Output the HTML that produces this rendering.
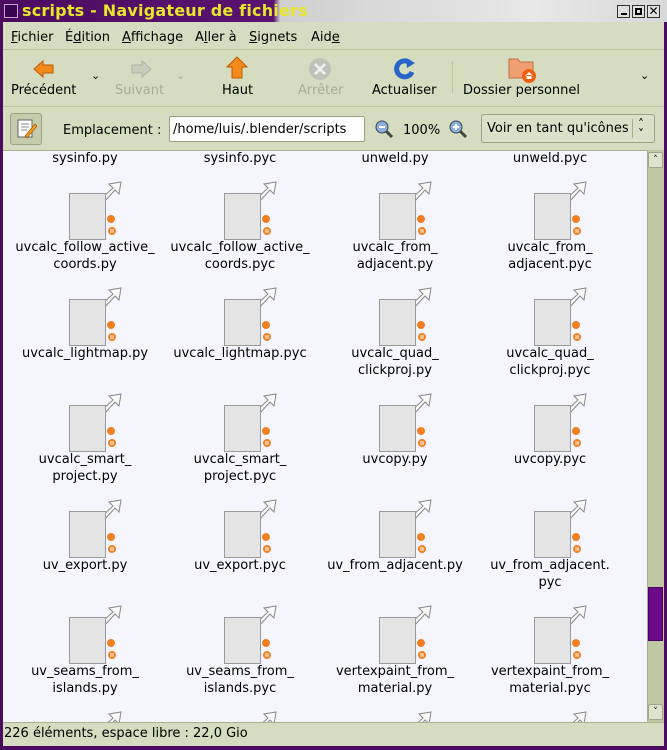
<!DOCTYPE html>
<html><head><meta charset="utf-8"><style>
*{margin:0;padding:0;box-sizing:border-box}
body{width:667px;height:750px;overflow:hidden;background:#4a0a5e;font-family:"DejaVu Sans","Liberation Sans",sans-serif;font-size:13px;color:#000;position:relative}
.abs{position:absolute}
#title{left:0;top:0;width:667px;height:22px;background:linear-gradient(90deg,#4b0c60 0,#5a1370 40%,#5a1370 41%,#cfcfcf 42%,#e8e8e8 80%,#d8d8d8 100%)}
#titletxt{left:22px;top:1px;color:#e6e62a;font-weight:bold;font-size:16px;letter-spacing:0.2px}
#win{left:3px;top:22px;width:661px;height:724px;background:#d5dcbf}
.mi{position:absolute;top:8px}
.tb{position:absolute;text-align:center;font-size:13px}
.gray{color:#a8ad98}
#view{left:3px;top:150px;width:644px;height:572px;background:#f5f6fd;overflow:hidden;border-top:1px solid #aab090}
.lbl{position:absolute;width:154px;text-align:center;line-height:17px;font-size:13px}
.ic{position:absolute;width:56px;height:60px}
</style></head><body>
<div id="title" class="abs">
 <div class="abs" style="left:4px;top:4px;width:14px;height:14px;background:#3a0550;border:1px solid #c8a0d8"></div>
 <div id="titletxt" class="abs">scripts - Navigateur de fichiers</div>
 <div class="abs" style="left:617px;top:5px;width:13px;height:13px;background:#e0e0e0;border:1px solid #333"><div class="abs" style="left:3px;top:7px;width:6px;height:2px;background:#000"></div></div>
 <div class="abs" style="left:632px;top:5px;width:13px;height:13px;background:#e0e0e0;border:1px solid #333"><div class="abs" style="left:2px;top:2px;width:7px;height:7px;border:2px solid #000"></div></div>
 <div class="abs" style="left:647px;top:5px;width:13px;height:13px;background:#e0e0e0;border:1px solid #333;font-size:12px;font-weight:bold;line-height:11px;text-align:center">✕</div>
</div>
<div id="win" class="abs">
 <div class="mi" style="left:8px"><u>F</u>ichier</div>
 <div class="mi" style="left:62px">É<u>d</u>ition</div>
 <div class="mi" style="left:119px"><u>A</u>ffichage</div>
 <div class="mi" style="left:192px">A<u>l</u>ler à</div>
 <div class="mi" style="left:246px"><u>S</u>ignets</div>
 <div class="mi" style="left:308px">Aid<u>e</u></div>
 <div class="abs" style="left:0;top:27px;width:661px;height:1px;background:#bcc4a4"></div>
 <!-- toolbar -->
 <svg class="abs" style="left:30px;top:37px" width="22" height="20"><path d="M1 10 L10 2 L10 6 L20 6 L20 14 L10 14 L10 18 Z" fill="#f58a1c" stroke="#c05a00"/></svg>
 <div class="tb" style="left:8px;top:61px">Précédent</div>
 <div class="abs" style="left:88px;top:47px;font-size:11px">⌄</div>
 <svg class="abs" style="left:127px;top:37px" width="22" height="20"><path d="M21 10 L12 2 L12 6 L2 6 L2 14 L12 14 L12 18 Z" fill="#c8ccbc" stroke="#b0b4a4"/></svg>
 <div class="tb gray" style="left:112px;top:61px">Suivant</div>
 <div class="abs gray" style="left:173px;top:47px;font-size:11px">⌄</div>
 <svg class="abs" style="left:223px;top:34px" width="22" height="24"><path d="M11 1 L21 11 L16 11 L16 22 L6 22 L6 11 L1 11 Z" fill="#f58a1c" stroke="#c05a00"/></svg>
 <div class="tb" style="left:219px;top:61px">Haut</div>
 <svg class="abs" style="left:305px;top:35px" width="24" height="24"><circle cx="12" cy="12" r="11" fill="#bfc2b8"/><path d="M7 7 L17 17 M17 7 L7 17" stroke="#eee" stroke-width="3"/></svg>
 <div class="tb gray" style="left:295px;top:61px">Arrêter</div>
 <svg class="abs" style="left:390px;top:34px" width="24" height="26"><path d="M18 8 A8 8 0 1 0 19 16" fill="none" stroke="#2a64c8" stroke-width="5"/><path d="M13 2 L22 7 L14 12 Z" fill="#2a64c8"/></svg>
 <div class="tb" style="left:369px;top:61px">Actualiser</div>
 <div class="abs" style="left:449px;top:39px;width:1px;height:32px;background:#bcc4a4"></div>
 <svg class="abs" style="left:505px;top:34px" width="30" height="28"><path d="M1 3 L10 3 L12 6 L25 6 L25 22 L1 22 Z" fill="#f0a070" stroke="#c07040"/><circle cx="21" cy="20" r="7" fill="#f06010"/><path d="M17 20 L21 16 L25 20 M18.5 19 L18.5 23 L23.5 23 L23.5 19" fill="#fff"/></svg>
 <div class="tb" style="left:460px;top:61px">Dossier personnel</div>
 <div class="abs" style="left:637px;top:47px;font-size:11px">⌄</div>
 <div class="abs" style="left:0;top:84px;width:661px;height:1px;background:#bcc4a4"></div>
 <!-- location -->
 <div class="abs" style="left:7px;top:91px;width:32px;height:32px;border:1px solid #9aa284;border-radius:3px;background:#c5ccac"></div>
 <svg class="abs" style="left:14px;top:97px" width="20" height="20"><rect x="1" y="1" width="14" height="17" fill="#fff" stroke="#666"/><path d="M4 5h8M4 8h8M4 11h6" stroke="#888"/><path d="M8 17 L18 5 L20 7 L10 19 Z" fill="#f5a020" stroke="#a05000" stroke-width=".7"/></svg>
 <div class="abs" style="left:60px;top:101px">Emplacement :</div>
 <div class="abs" style="left:166px;top:94px;width:196px;height:26px;background:#fff;border:1px solid #9aa284;border-radius:2px;padding:5px 3px">/home/luis/.blender/scripts</div>
 <svg class="abs" style="left:372px;top:98px" width="20" height="20"><circle cx="7" cy="7" r="6" fill="#8fb0d8" stroke="#345"/><path d="M4 7h6" stroke="#fff" stroke-width="2"/><path d="M11 11 L17 17" stroke="#444" stroke-width="3"/></svg>
 <div class="abs" style="left:400px;top:101px">100%</div>
 <svg class="abs" style="left:446px;top:98px" width="20" height="20"><circle cx="7" cy="7" r="6" fill="#8fb0d8" stroke="#345"/><path d="M4 7h6M7 4v6" stroke="#fff" stroke-width="2"/><path d="M11 11 L17 17" stroke="#444" stroke-width="3"/></svg>
 <div class="abs" style="left:478px;top:92px;width:174px;height:29px;border:1px solid #9aa284;border-radius:3px;background:#dbe1c8;padding:6px 5px">Voir en tant qu'icônes</div>
 <div class="abs" style="left:629px;top:97px;width:1px;height:19px;background:#a8b090"></div>
 <div class="abs" style="left:635px;top:97px;font-size:12px;line-height:10px">˄<br>˅</div>
 <!-- status -->
 <div class="abs" style="left:0;top:700px;width:661px;height:1px;background:#aab090"></div>
 <div class="abs" style="left:1px;top:704px">226 éléments, espace libre : 22,0 Gio</div>
</div>
<!-- scrollbar -->
<div class="abs" style="left:647px;top:150px;width:17px;height:572px;background:#bfc8a2;border-left:1px solid #a8b090"></div>
<div class="abs" style="left:648px;top:152px;width:15px;height:16px;background:#dde3cc;border:1px solid #a0a888;border-radius:2px;font-size:9px;text-align:center;line-height:14px">˄</div>
<div class="abs" style="left:648px;top:587px;width:15px;height:54px;background:#6a0a8a;border:1px solid #4a0060"></div>
<div class="abs" style="left:648px;top:704px;width:15px;height:16px;background:#dde3cc;border:1px solid #a0a888;border-radius:2px;font-size:9px;text-align:center;line-height:14px">˅</div>

<div id="view" class="abs">
<svg width="0" height="0" style="position:absolute"><defs><g id="doc"><path d="M34 18 L46 7 L42 3 L54 1 L52 13 L48 9 L37 21 Z" fill="#fafafa" stroke="#888"/><rect x="2.5" y="12.5" width="36" height="46" fill="#e4e4e4" stroke="#9a9a9a"/><circle cx="44" cy="38" r="4" fill="#f08020"/><circle cx="45" cy="50" r="4" fill="#f08020"/><rect x="43.5" y="48" width="1" height="4" fill="#fff"/><rect x="45.5" y="48" width="1" height="4" fill="#fff"/></g></defs></svg>
<div id="items"></div>
</div>
<script>
var cx=[82,237,392,547];
var rows=[
 [["sysinfo.py"],["sysinfo.pyc"],["unweld.py"],["unweld.pyc"]],
 [["uvcalc_follow_active_","coords.py"],["uvcalc_follow_active_","coords.pyc"],["uvcalc_from_","adjacent.py"],["uvcalc_from_","adjacent.pyc"]],
 [["uvcalc_lightmap.py"],["uvcalc_lightmap.pyc"],["uvcalc_quad_","clickproj.py"],["uvcalc_quad_","clickproj.pyc"]],
 [["uvcalc_smart_","project.py"],["uvcalc_smart_","project.pyc"],["uvcopy.py"],["uvcopy.pyc"]],
 [["uv_export.py"],["uv_export.pyc"],["uv_from_adjacent.py"],["uv_from_adjacent.","pyc"]],
 [["uv_seams_from_","islands.py"],["uv_seams_from_","islands.pyc"],["vertexpaint_from_","material.py"],["vertexpaint_from_","material.pyc"]],
 [[""],[""],[""],[""]]
];
var h='';
for(var r=0;r<rows.length;r++){
 var at=180+(r-1)*106-150;
 for(var c=0;c<4;c++){
  h+='<svg class="ic" style="left:'+(cx[c]-18)+'px;top:'+at+'px" viewBox="0 0 56 60"><use href="#doc"/></svg>';
  var lt=(r==0)?-1:at+58;
  h+='<div class="lbl" style="left:'+(cx[c]-77)+'px;top:'+lt+'px">'+rows[r][c].join('<br>')+'</div>';
 }
}
document.getElementById('items').innerHTML=h;
</script>
</body></html>
